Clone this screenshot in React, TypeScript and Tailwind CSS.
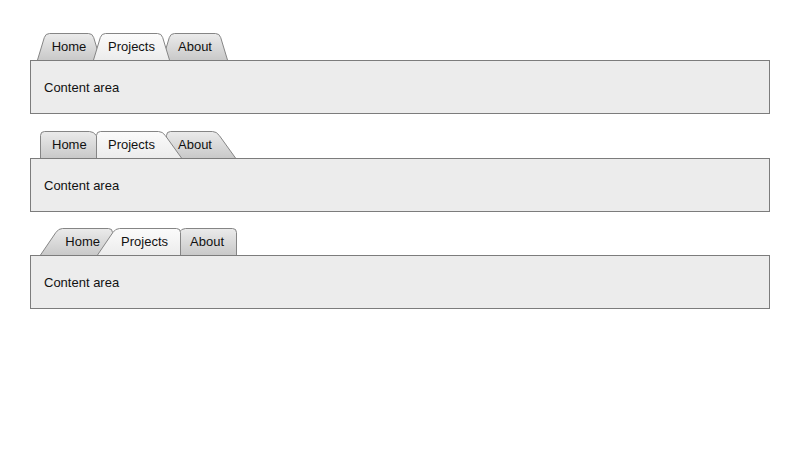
import React, { useId } from 'react';

interface TabProps {
  label: string;
  w: number;
  ls: number;
  rs: number;
  active?: boolean;
  className: string;
}

const H = 27;

function Tab({ label, w, ls, rs, active, className }: TabProps) {
  const id = useId().replace(/:/g, '');
  const r = 4;
  // left edge: (0.5,H) -> (ls+0.5,0.5), right edge: (w-rs-0.5,0.5) -> (w-0.5,H)
  const x0 = 0.5;
  const x1 = w - 0.5;
  const lTop = ls + 0.5;
  const rTop = w - rs - 0.5;
  const edge =
    `M ${x0} ${H} ` +
    `L ${lTop - (ls * r) / H} ${r + 0.5} ` +
    `Q ${lTop} 0.5 ${lTop + r} 0.5 ` +
    `L ${rTop - r} 0.5 ` +
    `Q ${rTop} 0.5 ${rTop + (rs * r) / H} ${r + 0.5} ` +
    `L ${x1} ${H}`;

  return (
    <div className={`relative flex h-[27px] shrink-0 items-center ${active ? 'z-10' : 'z-0'} ${className}`}>
      <svg className="absolute inset-0" width={w} height={H} viewBox={`0 0 ${w} ${H}`}>
        <defs>
          <linearGradient id={`g${id}`} x1="0" y1="0" x2="0" y2="1">
            {active ? (
              <>
                <stop offset="0" stopColor="#fbfbfb" />
                <stop offset="1" stopColor="#ececec" />
              </>
            ) : (
              <>
                <stop offset="0" stopColor="#ebebeb" />
                <stop offset="1" stopColor="#c9c9c9" />
              </>
            )}
          </linearGradient>
        </defs>
        <path d={`${edge} Z`} fill={`url(#g${id})`} />
        <path d={edge} fill="none" stroke="#858585" strokeWidth="1" />
      </svg>
      <span className="relative pt-px text-[13px] text-[#111]">{label}</span>
    </div>
  );
}

function Panel() {
  return (
    <div className="relative z-20 flex h-[54px] items-center border border-[#7c7c7c] bg-[#ececec] px-[13px] pt-[2px] text-[13px] text-[#111]">
      Content area
    </div>
  );
}

export default function App() {
  return (
    <div
      className="flex h-[450px] w-[800px] flex-col bg-white pl-[30px] pt-[33px]"
      style={{ fontFamily: '"Liberation Sans", Arial, sans-serif' }}
    >
      {/* both sides slanted */}
      <div className="w-[740px]">
        <div className="ml-[7px] flex">
          <Tab label="Home" w={64} ls={8} rs={8} className="w-[64px] justify-center" />
          <Tab label="Projects" w={77} ls={8} rs={8} active className="-ml-[8px] w-[77px] justify-center" />
          <Tab label="About" w={66} ls={8} rs={8} className="-ml-[8px] w-[66px] justify-center" />
        </div>
        <Panel />
      </div>

      {/* right side slanted */}
      <div className="mt-[17px] w-[740px]">
        <div className="ml-[10px] flex">
          <Tab label="Home" w={73} ls={0} rs={19} className="w-[73px] pl-[12px]" />
          <Tab label="Projects" w={86} ls={0} rs={19} active className="-ml-[17px] w-[86px] pl-[12px]" />
          <Tab label="About" w={70} ls={0} rs={19} className="-ml-[16px] w-[70px] pl-[12px]" />
        </div>
        <Panel />
      </div>

      {/* left side slanted */}
      <div className="mt-4 w-[740px]">
        <div className="ml-[10px] flex">
          <Tab label="Home" w={73} ls={18} rs={0} className="w-[73px] justify-end pr-[13px]" />
          <Tab label="Projects" w={84} ls={18} rs={0} active className="-ml-[16px] w-[84px] justify-end pr-[13px]" />
          <Tab label="About" w={74} ls={18} rs={0} className="-ml-[18px] w-[74px] justify-end pr-[13px]" />
        </div>
        <Panel />
      </div>
    </div>
  );
}
